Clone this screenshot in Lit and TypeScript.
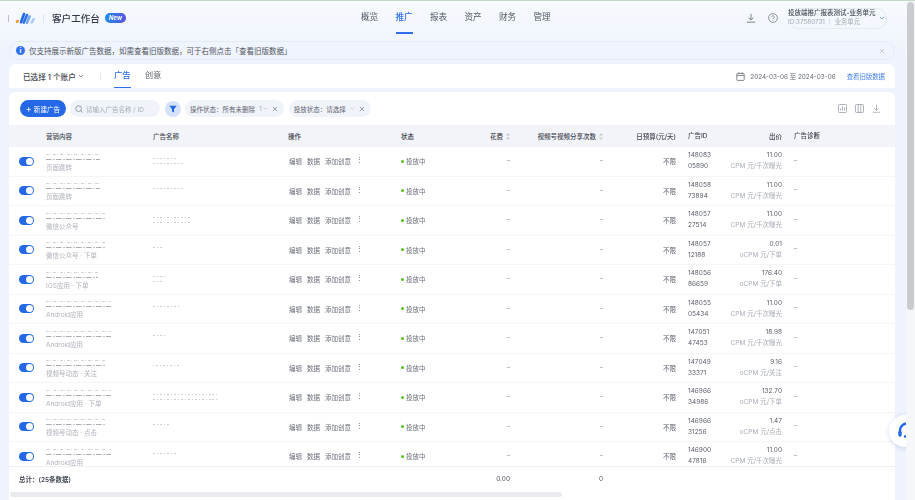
import { LitElement, html, css, svg } from 'lit';
import { customElement } from 'lit/decorators.js';

interface AdRow {
  sub: string;
  id: [string, string];
  bid: string;
  unit: string;
  // widths of the masked text lines, name column last
  mask: [number, number, number, number];
}

const CPM = 'CPM 元/千次曝光';

const ROWS: AdRow[] = [
  { sub: '页面跳转', id: ['148083', '05890'], bid: '11.00', unit: CPM, mask: [54, 54, 24, 31] },
  { sub: '页面跳转', id: ['148058', '73894'], bid: '11.00', unit: CPM, mask: [54, 54, 32, 0] },
  { sub: '微信公众号', id: ['148057', '27514'], bid: '11.00', unit: CPM, mask: [60, 60, 38, 38] },
  { sub: '微信公众号 · 下单', id: ['148057', '12188'], bid: '0.01', unit: 'oCPM 元/下单', mask: [60, 60, 11, 0] },
  { sub: 'IOS应用 · 下单', id: ['148056', '86659'], bid: '176.40', unit: 'oCPM 元/下单', mask: [52, 52, 12, 11] },
  { sub: 'Android应用', id: ['148055', '05434'], bid: '11.00', unit: CPM, mask: [65, 65, 28, 0] },
  { sub: 'Android应用', id: ['147051', '47453'], bid: '18.98', unit: CPM, mask: [65, 65, 12, 0] },
  { sub: '视频号动态 · 关注', id: ['147049', '33371'], bid: '9.16', unit: 'oCPM 元/关注', mask: [60, 60, 26, 0] },
  { sub: 'Android应用 · 下单', id: ['146966', '34986'], bid: '132.70', unit: 'oCPM 元/下单', mask: [65, 65, 64, 64] },
  { sub: '视频号动态 · 点击', id: ['146966', '31256'], bid: '1.47', unit: 'oCPM 元/点击', mask: [60, 60, 16, 0] },
  { sub: 'Android应用', id: ['146900', '47816'], bid: '11.00', unit: CPM, mask: [65, 65, 24, 0] },
];

const NAV = ['概览', '推广', '报表', '资产', '财务', '管理'];

const x = (size: number) => svg`<svg class="ic" width=${size} height=${size} viewBox="0 0 10 10" fill="none" stroke="currentColor" stroke-width="1"><path d="M1.5 1.5l7 7M8.5 1.5l-7 7"/></svg>`;
const chev = (size: number) => svg`<svg class="ic" width=${size} height=${size} viewBox="0 0 10 10" fill="none" stroke="currentColor" stroke-width="1"><path d="M1.5 3.2L5 6.8l3.5-3.6"/></svg>`;
const download = (size: number) => svg`<svg class="ic" width=${size} height=${size} viewBox="0 0 12 12" fill="none" stroke="currentColor" stroke-width="1"><path d="M6 1v7M3 5.5L6 8.5l3-3M1 11h10"/></svg>`;

@customElement('app-root')
export class AppRoot extends LitElement {
  static styles = css`
    :host {
      display: block;
      width: 915px;
      height: 500px;
      overflow: hidden;
      font-family: Inter, 'Noto Sans CJK SC', sans-serif;
      font-size: 6.5px;
      color: #4a4f59;
      background: linear-gradient(180deg, #f7fafe 0, #eef3fc 60px, #eef3fc 100%);
    }
    .page {
      display: flex;
      position: relative;
      height: 500px;
      border-top: 1px solid #c4d6c8;
      box-sizing: border-box;
      filter: blur(0.4px);
    }
    .main {
      width: 906px;
      flex: none;
      box-sizing: border-box;
      padding-right: 11px;
      padding-left: 9px;
      display: flex;
      flex-direction: column;
    }
    .scroll-y {
      width: 9px;
      background: #f5f7fa;
      padding: 1px 0 0 1px;
      box-sizing: border-box;
      position: relative;
      z-index: 2;
    }
    .scroll-y i {
      display: block;
      width: 7px;
      height: 308px;
      border-radius: 4px;
      background: #c9cbcf;
    }
    .ic { display: block; flex: none; }

    header {
      height: 40px;
      display: flex;
      align-items: center;
      flex: none;
      margin-left: -9px;
    }
    .brand { display: flex; align-items: center; width: 350px; flex: none; padding-bottom: 6px; box-sizing: border-box; padding-left: 8px; }
    .tick { width: 1px; height: 7px; background: #b9bec8; margin-right: 6px; }
    .tick.b { height: 9px; background: #dfe3ea; margin: 0 8px 0 8px; }
    .title { font-size: 9.6px; font-weight: 500; color: #333a47; }
    .new {
      margin-left: 5px;
      width: 21px;
      height: 10px;
      border-radius: 5px;
      background: linear-gradient(90deg, #1c8cf0, #5a54e0);
      color: #fff;
      font-size: 6px;
      font-style: italic;
      font-weight: 700;
      line-height: 10px;
      text-align: center;
    }
    nav { display: flex; gap: 17.3px; padding-left: 11px; height: 100%; }
    nav a {
      font-size: 8.6px;
      color: #555a64;
      height: 100%;
      box-sizing: border-box;
      padding-top: 9px;
      position: relative;
    }
    nav a.on { color: #2f6fed; font-weight: 500; }
    nav a.on::after {
      content: '';
      position: absolute;
      left: 0;
      right: 0;
      bottom: 7px;
      height: 2px;
      background: #2f6fed;
    }
    .acts { margin-left: auto; display: flex; align-items: center; padding-bottom: 6px; margin-right: 8px; color: #666b75; }
    .help { margin-left: 12px; margin-right: 9px; }
    .acct {
      width: 100px;
      height: 21px;
      box-sizing: border-box;
      border: 1px solid #e4ebf7;
      border-left-color: transparent;
      border-radius: 11px;
      display: flex;
      align-items: center;
      padding-right: 1px;
      color: #3f6fb5;
    }
    .acct div { flex: 1; line-height: 9px; white-space: nowrap; }
    .acct b { display: block; font-weight: 500; font-size: 6.5px; color: #444953; }
    .acct span { font-size: 6.3px; color: #a3a8b1; }

    .notice {
      height: 19px;
      flex: none;
      border: 1px solid #e3ebf7;
      border-radius: 9.5px;
      background: #eff4fd;
      box-sizing: border-box;
      display: flex;
      align-items: center;
      padding: 0 9px 0 6px;
      gap: 4px;
      font-size: 7.5px;
      color: #4f545e;
    }
    .notice .close { margin-left: auto; color: #aab0ba; }
    .dot-i {
      width: 9px;
      height: 9px;
      border-radius: 50%;
      background: #2f6fed;
      color: #fff;
      font-size: 7px;
      font-weight: 700;
      line-height: 9px;
      text-align: center;
      flex: none;
    }

    .tabs {
      margin-top: 4px;
      height: 24px;
      flex: none;
      border-radius: 6px 6px 0 0;
      background: #fff;
      display: flex;
      align-items: center;
      padding: 0 10px 0 14px;
      box-sizing: border-box;
      font-size: 7.6px;
      color: #3f444e;
    }
    .who { display: flex; align-items: center; gap: 2px; width: 77px; flex: none; font-weight: 500; }
    .sep { width: 1px; height: 7px; background: #e6e8ec; margin-right: 13px; }
    .tab { font-size: 8.4px; position: relative; height: 100%; line-height: 23px; color: #686d77; margin-right: 14px; }
    .tab.on { color: #2f6fed; font-weight: 500; }
    .tab.on::after {
      content: '';
      position: absolute;
      left: 0;
      right: 0;
      bottom: 0;
      height: 1.5px;
      background: #2f6fed;
    }
    .date { margin-left: auto; display: flex; align-items: center; gap: 5px; color: #666b75; font-size: 6.4px; }
    .old { margin-left: 11px; color: #3f7cf0; font-size: 6.4px; }

    .card {
      margin-top: 4px;
      flex: 1;
      min-height: 0;
      background: #fff;
      border-radius: 6px 6px 0 0;
      display: flex;
      flex-direction: column;
    }
    .tools {
      height: 33px;
      flex: none;
      display: flex;
      align-items: center;
      padding: 0 14px 0 11px;
      gap: 4px;
      box-sizing: border-box;
    }
    .create {
      width: 46px;
      height: 17px;
      border-radius: 9px;
      background: #2468e8;
      color: #fff;
      font-size: 6.6px;
      display: flex;
      align-items: center;
      justify-content: center;
      gap: 2px;
    }
    .search {
      width: 90px;
      height: 17px;
      border-radius: 9px;
      background: #f0f3fa;
      display: flex;
      align-items: center;
      gap: 3px;
      padding-left: 5px;
      box-sizing: border-box;
      color: #a8adb6;
    }
    .funnel {
      width: 16px;
      height: 16px;
      border-radius: 50%;
      background: #d6e2fa;
      display: flex;
      align-items: center;
      justify-content: center;
      margin-left: 1px;
    }
    .chip {
      height: 17px;
      border-radius: 9px;
      background: #f0f3fa;
      display: flex;
      align-items: center;
      padding: 0 6px 0 5px;
      gap: 4px;
      color: #5e636d;
      white-space: nowrap;
    }
    .chip + .chip { margin-left: 1px; }
    .chip .m { color: #a8adb6; display: flex; align-items: center; gap: 1px; }
    .tool-r { margin-left: auto; display: flex; gap: 8px; color: #9aa0aa; }

    .grid {
      display: grid;
      grid-template-columns: 37px 107px 135px 113px 68px 41px 93px 73px 52px 54px 1fr;
      align-items: center;
    }
    .head {
      height: 22px;
      flex: none;
      background: #f2f4f9;
      font-weight: 500;
      color: #3f444e;
    }
    .body { height: 319px; flex: none; overflow: hidden; }
    .row { height: 29.5px; box-sizing: border-box; border-bottom: 1px solid #f4f5f7; color: #5a5f69; }
    .r { text-align: right; white-space: nowrap; }
    .l2 { padding-left: 12px; line-height: 11px; white-space: nowrap; }
    .sw {
      width: 14.5px;
      height: 9px;
      margin-left: 10px;
      border-radius: 5px;
      background: #2468e8;
      position: relative;
    }
    .sw::after {
      content: '';
      position: absolute;
      right: 1px;
      top: 1px;
      width: 7px;
      height: 7px;
      border-radius: 50%;
      background: #fff;
    }
    .mask {
      display: block;
      height: 1px;
      margin-bottom: 4px;
      background: repeating-linear-gradient(90deg, #cfd2d6 0 3px, transparent 3px 4px, #e2e3e6 4px 5px, transparent 5px 7px);
    }
    .mask + .mask {
      background: repeating-linear-gradient(90deg, #a8acb3 0 5px, #d3d5d9 5px 6px, transparent 6px 7px, #c4c7cc 7px 9px, transparent 9px 10px);
    }
    .name { align-self: start; padding-top: 11px; }
    .name .mask, .name .mask + .mask {
      background: repeating-linear-gradient(90deg, #cdd0d5 0 1.5px, transparent 1.5px 3.5px);
    }
    .mk { align-self: start; padding-top: 6.5px; }
    .mk small { display: block; font-size: 6.5px; line-height: 9px; color: #aeb2ba; white-space: nowrap; }
    .ops { display: flex; gap: 5px; padding-left: 1px; color: #696e78; }
    .status { display: flex; align-items: center; gap: 2px; color: #696e78; }
    .status i { width: 3px; height: 3px; border-radius: 50%; background: #52c41a; }
    .dash { color: #8b9099; }
    .unit { display: block; color: #a8adb6; }
    .sort { display: inline-flex; align-items: center; gap: 3px; justify-content: flex-end; }
    .sort svg { color: #c6c9cf; }
    .foot {
      height: 24px;
      flex: none;
      border-top: 1px solid #eef0f3;
      box-sizing: border-box;
      font-weight: 400;
    }
    .foot b { font-weight: 600; color: #444953; padding-left: 10px; white-space: nowrap; }
    .wide { grid-column: span 5; }
    .bar { height: 7px; margin: 1px 0 0 0; padding: 1px 0 1px 1px; box-sizing: border-box; }
    .bar i { display: block; width: 552px; height: 5px; border-radius: 3px; background: #e9ebef; }

    .float {
      position: absolute;
      left: 889px;
      top: 414px;
      width: 32px;
      height: 32px;
      border-radius: 50%;
      background: #fff;
      box-shadow: 0 1px 5px rgba(70, 110, 190, 0.25);
      color: #2468e8;
      display: flex;
      align-items: center;
      padding-left: 9px;
      box-sizing: border-box;
    }
  `;

  private mask(w: number) {
    return w ? html`<span class="mask" style="width:${w}px"></span>` : '';
  }

  private renderRow(r: AdRow) {
    return html`<div class="grid row">
      <div class="sw"></div>
      <div class="mk">${this.mask(r.mask[0])}${this.mask(r.mask[1])}<small>${r.sub}</small></div>
      <div class="name">${this.mask(r.mask[2])}${this.mask(r.mask[3])}</div>
      <div class="ops"><span>编辑</span><span>数据</span><span>添加创意</span><span>⋮</span></div>
      <div class="status"><i></i>投放中</div>
      <div class="r dash">–</div>
      <div class="r dash">–</div>
      <div class="r">不限</div>
      <div class="l2">${r.id[0]}<br />${r.id[1]}</div>
      <div class="r" style="line-height:11px">${r.bid}<span class="unit">${r.unit}</span></div>
      <div class="l2 dash">–</div>
    </div>`;
  }

  render() {
    const sort = svg`<svg width="4" height="7" viewBox="0 0 4 7" fill="currentColor"><path d="M2 0l2 2.6H0zM2 7L0 4.4h4z"/></svg>`;
    return html`<div class="page">
      <div class="main">
        <header>
          <div class="brand">
            <span class="tick"></span>
            <svg class="ic" width="20" height="12" viewBox="0 0 20 12" fill="none" stroke-width="2.6" stroke-linecap="round">
              <path d="M2 9.6L2.8 9" stroke="#f59a23" />
              <path d="M6 10.2L9 2" stroke="#2468e8" />
              <path d="M8.8 10.6L12 3" stroke="#2f72ea" />
              <path d="M12 10.8L14.6 4.5" stroke="#6fa8f5" />
              <path d="M16.8 10.4L18.6 7.2" stroke="#a9cdf9" />
            </svg>
            <span class="tick b"></span>
            <span class="title">客户工作台</span>
            <span class="new">New</span>
          </div>
          <nav>${NAV.map((n) => html`<a class=${n === '推广' ? 'on' : ''}>${n}</a>`)}</nav>
          <div class="acts">
            ${download(10)}
            <svg class="ic help" width="10" height="10" viewBox="0 0 10 10" fill="none" stroke="currentColor" stroke-width="0.7">
              <circle cx="5" cy="5" r="4.4" />
              <path d="M3.7 4a1.3 1.3 0 1 1 2 1.1c-.5.3-.7.5-.7 1" />
              <path d="M5 7v.6" />
            </svg>
            <div class="acct">
              <div><b>投放端推广报表测试-业务单元</b><span>ID:37580731 ｜ 业务单元</span></div>
              ${chev(6)}
            </div>
          </div>
        </header>

        <div class="notice">
          <span class="dot-i">i</span>
          <span>仅支持展示新版广告数据，如需查看旧版数据，可于右侧点击「查看旧版数据」</span>
          <span class="close">${x(6)}</span>
        </div>

        <div class="tabs">
          <div class="who">已选择 1 个账户 ${chev(6)}</div>
          <span class="sep"></span>
          <span class="tab on">广告</span>
          <span class="tab">创意</span>
          <div class="date">
            <svg class="ic" width="9" height="9" viewBox="0 0 9 9" fill="none" stroke="currentColor" stroke-width="0.8">
              <rect x="0.8" y="1.4" width="7.4" height="7" rx="0.8" />
              <path d="M0.8 3.4h7.4M2.8 0.4v1.6M6.2 0.4v1.6" />
            </svg>
            2024-03-06 至 2024-03-06
          </div>
          <span class="old">查看旧版数据</span>
        </div>

        <div class="card">
          <div class="tools">
            <div class="create"><span style="font-size:9px;line-height:9px">+</span>新建广告</div>
            <div class="search">
              <svg class="ic" width="8" height="8" viewBox="0 0 8 8" fill="none" stroke="#777c86" stroke-width="0.7">
                <circle cx="3.6" cy="3.6" r="2.9" />
                <path d="M5.8 5.8L7.5 7.5" />
              </svg>
              请输入广告名称 / ID
            </div>
            <div class="funnel">
              <svg width="8" height="8" viewBox="0 0 8 8" fill="#2468e8"><path d="M0.3 0.8h7.4L5 4.2V7.4L3 6.4V4.2z" /></svg>
            </div>
            <div class="chip">操作状态：所有未删除 <span class="m">1 ${chev(5)}</span>${x(6)}</div>
            <div class="chip">投放状态：请选择 <span class="m">${chev(5)}</span>${x(6)}</div>
            <div class="tool-r">
              <svg class="ic" width="9" height="9" viewBox="0 0 9 9" fill="none" stroke="currentColor" stroke-width="0.8">
                <rect x="0.5" y="0.5" width="8" height="8" rx="1" />
                <path d="M2.5 6.5V4.5M4.5 6.5V2.5M6.5 6.5V3.5" />
              </svg>
              <svg class="ic" width="9" height="9" viewBox="0 0 9 9" fill="none" stroke="currentColor" stroke-width="0.8">
                <rect x="0.5" y="0.5" width="8" height="8" rx="1" />
                <path d="M3.2 0.5v8M5.8 0.5v8" />
              </svg>
              ${download(9)}
            </div>
          </div>

          <div class="grid head">
            <div></div>
            <div>营销内容</div>
            <div>广告名称</div>
            <div>操作</div>
            <div>状态</div>
            <div class="r sort">花费 ${sort}</div>
            <div class="r sort">视频号视频分享次数 ${sort}</div>
            <div class="r">日预算(元/天)</div>
            <div class="l2">广告ID</div>
            <div class="r">出价</div>
            <div class="l2">广告诊断</div>
          </div>

          <div class="body">${ROWS.map((r) => this.renderRow(r))}</div>

          <div class="grid foot">
            <div class="wide"><b>总计：(25条数据)</b></div>
            <div class="r">0.00</div>
            <div class="r">0</div>
          </div>
          <div class="bar"><i></i></div>
        </div>
      </div>
      <div class="float">
        <svg width="18" height="18" viewBox="0 0 18 18" fill="none" stroke="currentColor" stroke-width="2.4" stroke-linecap="round">
          <path d="M2 11.5V8a7 7 0 0 1 7-6.5" />
          <path d="M2 10.5v2.5" stroke-width="3.4" />
          <path d="M7 14.5h1" />
        </svg>
      </div>
      <div class="scroll-y"><i></i></div>
    </div>`;
  }
}
